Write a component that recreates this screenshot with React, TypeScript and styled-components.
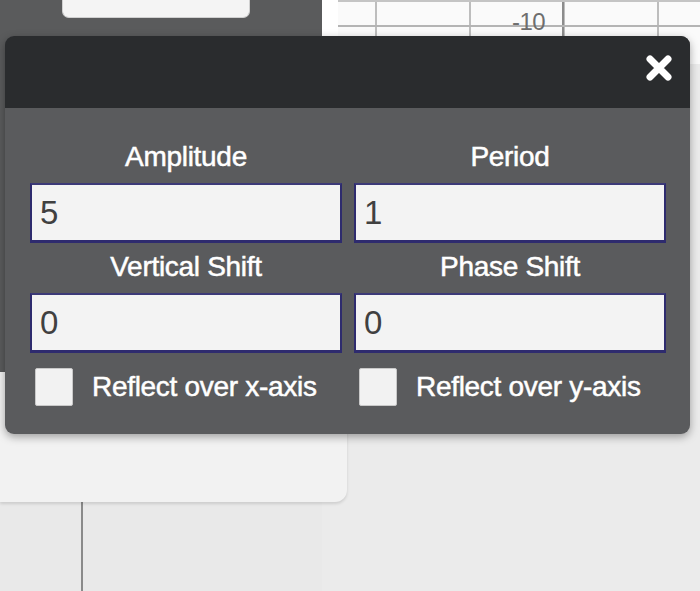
import React from 'react';
import styled, { createGlobalStyle } from 'styled-components';

const GlobalStyle = createGlobalStyle`
  html, body {
    margin: 0;
    padding: 0;
    font-family: "Liberation Sans", Arial, sans-serif;
    background: #ebebeb;
  }
  * {
    box-sizing: border-box;
  }
`;

const Page = styled.div`
  position: relative;
  width: 700px;
  height: 591px;
  overflow: hidden;
  display: grid;
  grid-template-columns: 322px 1fr;
  align-items: start;
  background-color: #e9e9e9;
  background-image: linear-gradient(
    to right,
    transparent 81px,
    #8a8a8a 81px,
    #8a8a8a 83px,
    transparent 83px
  );
`;

const Sidebar = styled.div`
  position: relative;
  z-index: 1;
  height: 502px;
  display: flex;
  flex-direction: column;
`;

const DarkPanel = styled.div`
  flex: 1;
  background: #5a5b5c;
`;

const TopCard = styled.div`
  margin-left: 62px;
  width: 188px;
  height: 18px;
  background: #f4f4f4;
  border: 1px solid #d0d0d0;
  border-top: none;
  border-radius: 0 0 7px 7px;
`;

const ListCard = styled.div`
  width: 347px;
  height: 130px;
  background: #f2f2f2;
  border-bottom-right-radius: 12px;
  box-shadow: 0 2px 3px rgba(0, 0, 0, 0.12);
`;

const Graph = styled.div`
  height: 591px;
  display: flex;
  flex-direction: column;
  background: #ebebeb;
`;

const GraphPaper = styled.div`
  position: relative;
  height: 64px;
  background-color: #fafafa;
  border-left: 16px solid #ffffff;
  background-image:
    linear-gradient(to bottom, transparent 25px, #b4b4b4 25px, #b4b4b4 27px, transparent 27px),
    linear-gradient(to bottom, #c4c4c4 0, #c4c4c4 2px, transparent 2px),
    linear-gradient(to right, transparent 224px, #8c8c8c 224px, #8c8c8c 226px, transparent 226px),
    repeating-linear-gradient(
      to right,
      transparent 0,
      transparent 37px,
      #bdbdbd 37px,
      #bdbdbd 39px,
      transparent 39px,
      transparent 94px
    );
`;

const TickLabel = styled.span`
  position: absolute;
  left: 174px;
  top: 8px;
  font-size: 24px;
  color: #6e6e6e;
  letter-spacing: -0.5px;
`;

const Dialog = styled.div`
  position: absolute;
  z-index: 2;
  left: 5px;
  top: 36px;
  width: 685px;
  border-radius: 9px;
  overflow: hidden;
  background: #5a5b5d;
  box-shadow: 0 3px 8px rgba(0, 0, 0, 0.35);
`;

const Header = styled.div`
  height: 72px;
  background: #2a2c2e;
  display: flex;
  justify-content: flex-end;
  align-items: flex-start;
  padding: 16px 15px 0 0;
`;

const CloseButton = styled.button`
  width: 32px;
  height: 32px;
  padding: 0;
  border: none;
  background: none;
  cursor: pointer;
  display: flex;
  align-items: center;
  justify-content: center;
`;

const Body = styled.div`
  padding: 32px 24px 28px 25px;
`;

const FieldGrid = styled.div`
  display: grid;
  grid-template-columns: 1fr 1fr;
  column-gap: 12px;
  row-gap: 7px;
`;

const Field = styled.label`
  display: flex;
  flex-direction: column;
  gap: 9px;
`;

const FieldLabel = styled.span`
  display: block;
  text-align: center;
  font-size: 28px;
  line-height: 34px;
  color: #ffffff;
  letter-spacing: -0.3px;
  -webkit-text-stroke: 0.5px #ffffff;
`;

const NumberInput = styled.input`
  width: 100%;
  height: 60px;
  padding: 0 8px;
  margin: 0;
  font-family: "Liberation Sans", Arial, sans-serif;
  font-size: 33px;
  color: #404040;
  background: #f3f3f3;
  border: 2px solid #2e2b6e;
  border-top-color: #3c3a78;
  border-bottom-width: 3px;
  border-radius: 0;
  outline: none;
`;

const CheckRow = styled.label`
  display: flex;
  align-items: center;
  gap: 19px;
  margin-top: 8px;
  padding-left: 5px;
`;

const CheckBox = styled.span<{ checked?: boolean }>`
  width: 38px;
  height: 38px;
  flex: none;
  background: ${(p) => (p.checked ? '#2e2b6e' : '#f2f2f2')};
  border: 1px solid #c9c9c9;
  border-radius: 2px;
`;

const CheckText = styled.span`
  font-size: 28px;
  color: #ffffff;
  letter-spacing: -0.3px;
  -webkit-text-stroke: 0.5px #ffffff;
`;

const fields = [
  { label: 'Amplitude', value: '5' },
  { label: 'Period', value: '1' },
  { label: 'Vertical Shift', value: '0' },
  { label: 'Phase Shift', value: '0' },
];

const reflections = ['Reflect over x-axis', 'Reflect over y-axis'];

export default function App() {
  return (
    <>
      <GlobalStyle />
      <Page>
        <Sidebar>
          <DarkPanel>
            <TopCard />
          </DarkPanel>
          <ListCard />
        </Sidebar>
        <Graph>
          <GraphPaper>
            <TickLabel>-10</TickLabel>
          </GraphPaper>
        </Graph>

        <Dialog>
          <Header>
            <CloseButton aria-label='Close'>
              <svg width='30' height='30' viewBox='0 0 30 30'>
                <path
                  d='M6 6 L24 24 M24 6 L6 24'
                  stroke='#ffffff'
                  strokeWidth='7'
                  strokeLinecap='round'
                />
              </svg>
            </CloseButton>
          </Header>
          <Body>
            <FieldGrid>
              {fields.map((f) => (
                <Field key={f.label}>
                  <FieldLabel>{f.label}</FieldLabel>
                  <NumberInput type='text' defaultValue={f.value} />
                </Field>
              ))}
              {reflections.map((r) => (
                <CheckRow key={r}>
                  <CheckBox />
                  <CheckText>{r}</CheckText>
                </CheckRow>
              ))}
            </FieldGrid>
          </Body>
        </Dialog>
      </Page>
    </>
  );
}
